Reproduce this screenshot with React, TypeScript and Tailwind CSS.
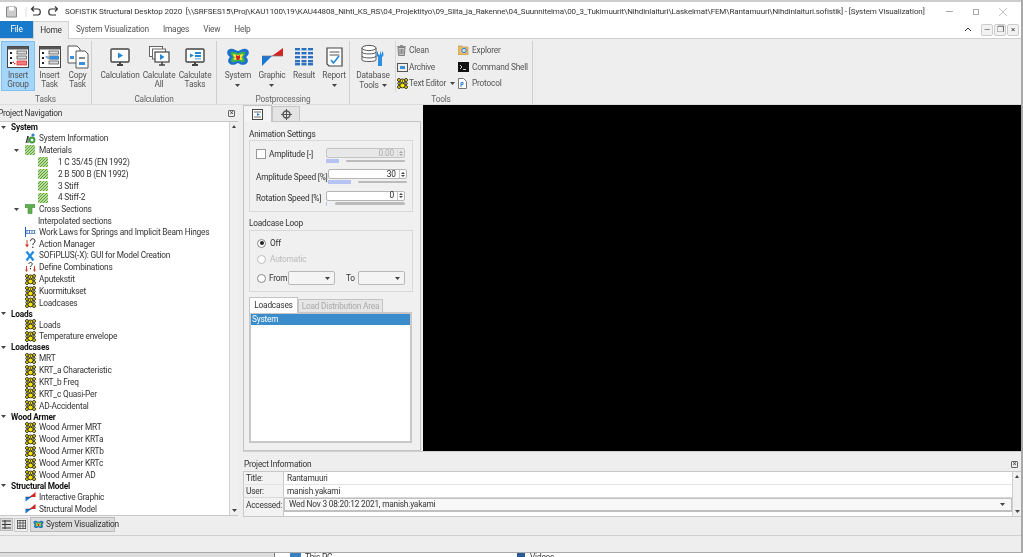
import type { ReactNode } from "react";

// small drawn icons
const Bear = () => (
  <svg width="11" height="11" viewBox="0 0 11 11" className="shrink-0">
    <g fill="#f5e400" stroke="#222" strokeWidth="0.9">
      <circle cx="2" cy="2" r="1.5" />
      <circle cx="9" cy="2" r="1.5" />
      <circle cx="2" cy="9" r="1.5" />
      <circle cx="9" cy="9" r="1.5" />
      <circle cx="1.8" cy="5.5" r="1.1" />
      <circle cx="9.2" cy="5.5" r="1.1" />
      <ellipse cx="5.5" cy="3" rx="2.4" ry="2" />
      <ellipse cx="5.5" cy="7.5" rx="2.6" ry="2.4" />
    </g>
    <circle cx="5.5" cy="3" r="0.7" fill="#222" />
  </svg>
);

const Hatch = () => (
  <svg width="10" height="10" viewBox="0 0 10 10" className="shrink-0">
    <rect width="10" height="10" fill="#b9dc9c" />
    <path d="M0 3 3 0M0 6 6 0M0 9 9 0M2 10 10 2M5 10 10 5M8 10 10 8" stroke="#4c9a2a" strokeWidth="0.9" />
  </svg>
);

const TSection = () => (
  <svg width="10" height="10" viewBox="0 0 10 10" className="shrink-0">
    <path d="M0 0.5h10v3H7v6H3v-6H0z" fill="#5fb04f" stroke="#3c8a36" strokeWidth="0.6" />
  </svg>
);

const SysInfo = () => (
  <svg width="11" height="11" viewBox="0 0 11 11" className="shrink-0">
    <path d="M1 10 3 3v7" fill="none" stroke="#222" strokeWidth="1" />
    <circle cx="7" cy="7" r="3.4" fill="#3f9a3a" />
    <circle cx="7" cy="7" r="1.5" fill="#fff" />
    <circle cx="8" cy="2" r="1.6" fill="#2d7fd0" />
  </svg>
);

const WorkLaw = () => (
  <svg width="11" height="10" viewBox="0 0 11 10" className="shrink-0">
    <path d="M0.5 0v10" stroke="#1f5fb0" strokeWidth="1" />
    <path d="M1 3.5h9.5M1 6.5h9.5" stroke="#3a6fb8" strokeWidth="0.7" />
    <path d="M2 3.5v3M4.5 3.5v3M7 3.5v3M9.5 3.5v3" stroke="#3a6fb8" strokeWidth="0.9" />
  </svg>
);

const Action = () => (
  <svg width="11" height="11" viewBox="0 0 11 11" className="shrink-0">
    <path d="M2 2v5" stroke="#d63b2f" strokeWidth="1" />
    <path d="M0 6.5h4l-2 3z" fill="#d63b2f" />
    <path d="M5.5 3c0-3 4.5-3 4.5 0 0 2-2.2 2-2.2 4" fill="none" stroke="#222" strokeWidth="1" />
    <rect x="7.3" y="8.6" width="1.1" height="1.4" fill="#222" />
  </svg>
);

const Combos = () => (
  <svg width="11" height="11" viewBox="0 0 11 11" className="shrink-0">
    <path d="M1.5 4v4M9.5 4v4" stroke="#d63b2f" strokeWidth="1" />
    <path d="M0 7.5h3L1.5 10zM8 7.5h3L9.5 10z" fill="#d63b2f" />
    <path d="M3.8 2c0-2 3.4-2 3.4 0 0 1.5-1.7 1.5-1.7 3" fill="none" stroke="#222" strokeWidth="0.9" />
    <rect x="5" y="6" width="1" height="1.2" fill="#222" />
  </svg>
);

const XMark = () => (
  <svg width="10" height="10" viewBox="0 0 10 10" className="shrink-0">
    <path d="M1.5 0.5 8.5 9.5M8.5 0.5 1.5 9.5" stroke="#1e88e5" strokeWidth="2.2" />
  </svg>
);

const GraphicSmall = ({ s = 11 }: { s?: number }) => (
  <svg width={s} height={s} viewBox="0 0 22 22" className="shrink-0">
    <path d="M1 12 13 12 1 21z" fill="#1976d2" />
    <path d="M21 2v10H9z" fill="#d32424" />
    <path d="M1 12h12" stroke="#333" strokeWidth="1" />
  </svg>
);

const Caret = () => (
  <svg width="5" height="3" viewBox="0 0 5 3" className="shrink-0">
    <path d="M0 0h5L2.5 3z" fill="#444" />
  </svg>
);

type Row = {
  label: string;
  level: 0 | 1 | 2;
  icon?: ReactNode;
  open?: boolean;
};

const bearRow = (label: string): Row => ({ label, level: 1, icon: <Bear /> });

const rows: Row[] = [
  { label: "System", level: 0 },
  { label: "System Information", level: 1, icon: <SysInfo /> },
  { label: "Materials", level: 1, icon: <Hatch />, open: true },
  { label: "1 C 35/45 (EN 1992)", level: 2, icon: <Hatch /> },
  { label: "2 B 500 B (EN 1992)", level: 2, icon: <Hatch /> },
  { label: "3 Stiff", level: 2, icon: <Hatch /> },
  { label: "4 Stiff-2", level: 2, icon: <Hatch /> },
  { label: "Cross Sections", level: 1, icon: <TSection />, open: true },
  { label: "Interpolated sections", level: 1 },
  { label: "Work Laws for Springs and Implicit Beam Hinges", level: 1, icon: <WorkLaw /> },
  { label: "Action Manager", level: 1, icon: <Action /> },
  { label: "SOFiPLUS(-X): GUI for Model Creation", level: 1, icon: <XMark /> },
  { label: "Define Combinations", level: 1, icon: <Combos /> },
  bearRow("Aputekstit"),
  bearRow("Kuormitukset"),
  bearRow("Loadcases"),
  { label: "Loads", level: 0 },
  bearRow("Loads"),
  bearRow("Temperature envelope"),
  { label: "Loadcases", level: 0 },
  bearRow("MRT"),
  bearRow("KRT_a Characteristic"),
  bearRow("KRT_b Freq"),
  bearRow("KRT_c Quasi-Per"),
  bearRow("AD-Accidental"),
  { label: "Wood Armer", level: 0 },
  bearRow("Wood Armer MRT"),
  bearRow("Wood Armer KRTa"),
  bearRow("Wood Armer KRTb"),
  bearRow("Wood Armer KRTc"),
  bearRow("Wood Armer AD"),
  { label: "Structural Model", level: 0 },
  { label: "Interactive Graphic", level: 1, icon: <GraphicSmall /> },
  { label: "Structural Model", level: 1, icon: <GraphicSmall /> },
];

const TreeRow = ({ row }: { row: Row }) => {
  if (row.level === 0) {
    return (
      <div className="h-[10px] flex items-center pl-[1px] font-bold text-[#111] shrink-0 whitespace-nowrap">
        <span className="w-[10px] flex"><Caret /></span>
        <span>{row.label}</span>
      </div>
    );
  }
  if (row.level === 2) {
    return (
      <div className="h-[11.85px] flex items-center pl-[38px] shrink-0 whitespace-nowrap">
        <span className="w-[20px] flex">{row.icon}</span>
        <span>{row.label}</span>
      </div>
    );
  }
  if (!row.icon) {
    return (
      <div className="h-[10.5px] flex items-center pl-[38px] shrink-0 whitespace-nowrap">
        <span>{row.label}</span>
      </div>
    );
  }
  return (
    <div className="h-[11.85px] flex items-center pl-[14px] shrink-0 whitespace-nowrap">
      <span className="w-[11px] flex">{row.open && <Caret />}</span>
      <span className="w-[14px] flex">{row.icon}</span>
      <span>{row.label}</span>
    </div>
  );
};

// ribbon big icons
const InsertIcon = ({ kind }: { kind: "group" | "task" }) => (
  <svg width="22" height="22" viewBox="0 0 22 22">
    <rect x="0.5" y="0.5" width="21" height="21" fill="#fff" stroke="#444" />
    <rect x="0.5" y="0.5" width="21" height="3" fill="#555" />
    <g fill="#222">
      <rect x="3" y="6" width="2" height="2" />
      <rect x="3" y="11" width="2" height="2" />
      <rect x="3" y="16" width="2" height="2" />
    </g>
    <g fill="#ddd" stroke="#555" strokeWidth="0.8">
      <rect x="10" y="5" width="9.5" height="3" />
      <rect x="10" y="10" width="9.5" height="3" />
    </g>
    {kind === "group" ? (
      <>
        <rect x="10" y="15" width="9.5" height="4" fill="#f47c7c" stroke="#c33" strokeWidth="0.8" />
        <path d="M9 17H5l2-2v4z" fill="#d32f2f" />
      </>
    ) : (
      <>
        <rect x="11" y="10" width="8.5" height="3.5" fill="#3a8fdc" />
        <path d="M10 11.5H6l2.5-2v4z" fill="#1976d2" />
        <rect x="10" y="15" width="9.5" height="3" fill="#ddd" stroke="#555" strokeWidth="0.8" />
      </>
    )}
  </svg>
);

const CopyIcon = () => (
  <svg width="22" height="24" viewBox="0 0 22 24">
    <path d="M1 1h9l3 3v14H1z" fill="#fff" stroke="#555" />
    <path d="M9 6h9l3 3v14H9z" fill="#fff" stroke="#555" />
    <rect x="3" y="11" width="4" height="3" fill="#3a8fdc" />
    <rect x="12" y="12" width="6" height="2" fill="#888" />
    <rect x="12" y="17" width="6" height="3" fill="#3a8fdc" />
  </svg>
);

const Monitor = ({ children }: { children?: ReactNode }) => (
  <g>
    <rect x="1" y="1" width="18" height="13" rx="1" fill="#fff" stroke="#444" strokeWidth="1.4" />
    <path d="M7 17h6M10 14v3" stroke="#444" strokeWidth="2" />
    {children}
  </g>
);

const CalcIcon = () => (
  <svg width="20" height="18" viewBox="0 0 20 18">
    <Monitor><path d="M8 4.5v6l5-3z" fill="#1f88d8" /></Monitor>
  </svg>
);

const CalcAllIcon = () => (
  <svg width="21" height="21" viewBox="0 0 21 21">
    <rect x="0.5" y="0.5" width="13" height="10" fill="#fff" stroke="#666" />
    <rect x="3.5" y="3" width="13" height="10" fill="#fff" stroke="#666" />
    <rect x="6" y="6" width="14" height="10" fill="#fff" stroke="#444" strokeWidth="1.2" />
    <path d="M11 8v6l4.5-3z" fill="#1f88d8" />
    <path d="M10 19h6M13 16v3" stroke="#444" strokeWidth="1.6" />
  </svg>
);

const CalcTasksIcon = () => (
  <svg width="20" height="18" viewBox="0 0 20 18">
    <Monitor>
      <path d="M9 7.5 5 5.5v4z" fill="#1f88d8" />
      <rect x="10" y="4" width="6" height="2" fill="#1f88d8" />
      <rect x="10" y="7" width="6" height="2" fill="#1f88d8" />
      <rect x="10" y="10" width="6" height="1.5" fill="#8bbbe6" />
    </Monitor>
  </svg>
);

const SystemIcon = ({ w = 24, h = 18 }: { w?: number; h?: number }) => (
  <svg width={w} height={h} viewBox="0 0 24 18" className="shrink-0">
    <path d="M2 2c4-3 7 0 10 1 3-1 6-4 10-1 2 3 0 6-2 7 2 2 3 5 0 7-4 2-6 0-8-1-2 1-5 3-8 1-3-2-2-5 0-7C2 8 0 5 2 2z" fill="#1f6fd0" />
    <path d="M5 4c3-1 5 1 7 1 2 0 4-2 7-1 1 2-1 4-2 5 1 1 3 3 1 5-3 1-4-1-6-1s-3 2-6 1c-2-2 0-4 1-5-1-1-3-3-2-5z" fill="#39b54a" />
    <path d="M7 6c2 0 3 1 5 1s3-1 5-1c0 2-1 3-2 3 1 1 2 2 1 3-2 0-3-1-4-1s-2 1-4 1c-1-1 0-2 1-3-1 0-2-1-2-3z" fill="#ffe23a" />
    <path d="M10 7l2 1 2-1v3l-1 2h-2l-1-2z" fill="#d4202a" />
  </svg>
);

const GraphicIcon = () => (
  <svg width="21" height="18" viewBox="0 0 21 18">
    <path d="M0 8h10L0 18z" fill="#1976d2" />
    <path d="M21 0v8H10z" fill="#d32424" />
    <path d="M0 8h21" stroke="#777" strokeWidth="0.7" />
  </svg>
);

const ResultIcon = () => (
  <svg width="18" height="18" viewBox="0 0 18 18">
    {[0, 4, 8, 12, 15].map((y) =>
      [0, 6.5, 13].map((x) => (
        <rect key={`${x}-${y}`} x={x} y={y} width="5" height="2.4" fill="#2b6fc0" />
      ))
    )}
  </svg>
);

const ReportIcon = () => (
  <svg width="17" height="20" viewBox="0 0 17 20">
    <path d="M1 1h15v18H3l-2-2z" fill="#fff" stroke="#444" strokeWidth="1.2" />
    <path d="M3.5 5h10M3.5 8h10" stroke="#555" />
    <path d="M5 13l2.5 3L13 9" fill="none" stroke="#1f88d8" strokeWidth="1.6" />
  </svg>
);

const DbIcon = () => (
  <svg width="24" height="24" viewBox="0 0 24 24">
    <g fill="#fff" stroke="#555">
      <path d="M1 4v12c0 2 14 2 14 0V4z" />
      <ellipse cx="8" cy="4" rx="7" ry="2.6" />
      <path d="M1 8c0 2.6 14 2.6 14 0M1 12c0 2.6 14 2.6 14 0" fill="none" />
    </g>
    <path d="M19 7v4l-2-1v-3c-2 2-2 5 0 6v9h4v-9c2-1 2-4 0-6v4z" fill="#2f8fe0" />
  </svg>
);

const RibbonBtn = ({
  lines,
  icon,
  w,
  caret,
  active,
}: {
  lines: string[];
  icon: ReactNode;
  w: string;
  caret?: boolean;
  active?: boolean;
}) => (
  <div
    className={`${w} h-[50px] flex flex-col items-center shrink-0 border ${
      active ? "bg-[#a4d6fb] border-[#7ec1f3]" : "border-transparent"
    }`}
  >
    <div className="h-[29px] flex items-center justify-center">{icon}</div>
    <div className="text-center leading-[9px] whitespace-nowrap">
      {lines.map((l) => (
        <div key={l}>{l}</div>
      ))}
      {caret && <div className="flex justify-center mt-[4px]"><Caret /></div>}
    </div>
  </div>
);

const RibbonGroup = ({ label, w, children }: { label: string; w: string; children: ReactNode }) => (
  <div className={`${w} h-[63px] shrink-0 flex flex-col border-r border-[#cfcfcf]`}>
    <div className="h-[51px] flex items-start">{children}</div>
    <div className="text-center text-[#666] mt-[3px]">{label}</div>
  </div>
);

const SmallTool = ({ icon, label, caret }: { icon: ReactNode; label: string; caret?: boolean }) => (
  <div className="h-[16.5px] flex items-center">
    <span className="w-[12px] flex justify-start">{icon}</span>
    <span className="whitespace-nowrap">{label}</span>
    {caret && <span className="ml-[4px] flex"><Caret /></span>}
  </div>
);

const Spin = ({ value, disabled }: { value: string; disabled?: boolean }) => (
  <div className={`h-[10px] w-[79px] rounded-[2px] border flex items-center justify-end ${disabled ? "bg-[#e8e8e8] border-[#c4c4c4] text-[#aaa]" : "bg-white border-[#b5b5b5] text-[#222]"}`}>
    <span className="leading-none pr-[3px]">{value}</span>
    <span className={`w-[7px] h-full border-l border-[#c4c4c4] flex flex-col items-center justify-center gap-[1px] ${disabled ? "opacity-40" : ""}`}>
      <span className="w-0 h-0 border-x-[2px] border-x-transparent border-b-[2px] border-b-[#444]" />
      <span className="w-0 h-0 border-x-[2px] border-x-transparent border-t-[2px] border-t-[#444]" />
    </span>
  </div>
);

const Slide = ({ bar, gap }: { bar: string; gap: string }) => (
  <div className="w-[79px] h-[4px] flex items-center mt-[1px]">
    <span className={`${bar} h-[4px] bg-[#b6c3f2] shrink-0`} />
    <span className={`${gap} shrink-0`} />
    <span className="flex-1 h-[2.5px] bg-[#bbb] rounded-full" />
  </div>
);

const Radio = ({ on, off }: { on?: boolean; off?: boolean }) => (
  <span className={`w-[9px] h-[9px] rounded-full border flex items-center justify-center shrink-0 ${off ? "border-[#bbb]" : "border-[#888]"} bg-white`}>
    {on && <span className="w-[4px] h-[4px] rounded-full bg-[#222]" />}
  </span>
);

const Combo = ({ w }: { w: string }) => (
  <div className={`${w} h-[14px] bg-[#f4f4f4] border border-[#b8b8b8] rounded-[2px] flex items-center justify-end pr-[4px] shrink-0`}>
    <Caret />
  </div>
);

const ScrollBar = ({ h }: { h: string }) => (
  <div className={`${h} w-[9px] bg-[#f0f0f0] border-l border-[#cfcfcf] flex flex-col items-center justify-between py-[3px] shrink-0`}>
    <span className="w-0 h-0 border-x-[2.5px] border-x-transparent border-b-[3px] border-b-[#444]" />
    <Caret />
  </div>
);

const CloseBox = () => (
  <span className="w-[7px] h-[7px] rounded-[1px] border border-[#666] flex items-center justify-center text-[7px] leading-none text-[#444] shrink-0">×</span>
);

export default function App() {
  return (
    <div className="w-[1023px] h-[557px] overflow-hidden flex flex-col bg-[#b9b9b9] text-[8.3px] tracking-[-0.2px] text-[#333] font-['Roboto',sans-serif] leading-none blur-[0.3px]">
      <div className="h-[553px] flex shrink-0">
        <div className="w-[1021px] h-[553px] flex flex-col bg-[#eeeeee] border-b border-[#a8a8a8] shrink-0">
          {/* title bar */}
          <div className="h-[21px] flex items-center bg-white border-t-2 border-[#cdcdcd] shrink-0">
            <svg width="52" height="12" viewBox="0 0 52 12" className="ml-[6px] shrink-0">
              <path d="M0.5 1h9l1 1v9h-10z" fill="#ccc" stroke="#888" />
              <rect x="3" y="1" width="5" height="3.5" fill="#fff" />
              <path d="M20 1v10" stroke="#ddd" />
              <path d="M27 9h5c3 0 3-6 0-6h-6M28 0.5 25.5 3 28 5.5" fill="none" stroke="#333" strokeWidth="1.2" />
              <path d="M50 9h-5c-3 0-3-6 0-6h6M49 0.5 51.5 3 49 5.5" fill="none" stroke="#333" strokeWidth="1.2" />
            </svg>
            <span className="ml-[7px] text-[8px] tracking-[-0.12px] text-[#333] whitespace-pre">
              {"SOFiSTiK Structural Desktop 2020  [\\\\SRFSES15\\Proj\\KAU1100\\19\\KAU44808_Nihti_KS_RS\\04_Projektityo\\09_Silta_ja_Rakenne\\04_Suunnitelma\\00_3_Tukimuurit\\Nihdinlaituri\\Laskelmat\\FEM\\Rantamuuri\\Nihdinlaituri.sofistik] - [System Visualization]"}
            </span>
            <div className="ml-auto flex items-center gap-[20px] pr-[14px]">
              <span className="w-[7px] h-px bg-[#aaa]" />
              <span className="w-[6px] h-[6px] border border-[#aaa]" />
              <svg width="8" height="8" viewBox="0 0 8 8"><path d="M0 0l8 8M8 0 0 8" stroke="#aaa" strokeWidth="0.7" /></svg>
            </div>
          </div>
          {/* menu tabs */}
          <div className="h-[18px] flex items-stretch bg-white border-b border-[#d0d0d0] shrink-0 text-[#555]">
            <div className="w-[33px] bg-[#1979ca] text-white flex items-center justify-center">File</div>
            <div className="w-[36px] -mb-px bg-[#eeeeee] border-x border-t border-[#d0d0d0] flex items-center justify-center text-[#333]">Home</div>
            <div className="ml-[7px] flex items-center gap-[14px]">
              <span>System Visualization</span>
              <span>Images</span>
              <span>View</span>
              <span>Help</span>
            </div>
            <div className="ml-auto flex items-center pr-[2px] gap-[1px]">
              <svg width="8" height="5" viewBox="0 0 8 5" className="mr-[8px]"><path d="M1 4l3-3 3 3" fill="none" stroke="#333" /></svg>
              {["—", "❐", "×"].map((c) => (
                <span key={c} className="w-[12px] h-[12px] border border-[#ccc] rounded-[2px] bg-[#f2f2f2] flex items-center justify-center text-[8px] text-[#333]">{c}</span>
              ))}
            </div>
          </div>
          {/* ribbon */}
          <div className="h-[66px] flex pt-[2px] border-b border-[#dcdcdc] shrink-0 text-[#555]">
            <RibbonGroup label="Tasks" w="w-[92px]">
              <div className="pl-[1px] flex">
                <RibbonBtn lines={["Insert", "Group"]} w="w-[34px]" active icon={<InsertIcon kind="group" />} />
                <RibbonBtn lines={["Insert", "Task"]} w="w-[29px]" icon={<InsertIcon kind="task" />} />
                <RibbonBtn lines={["Copy", "Task"]} w="w-[27px]" icon={<CopyIcon />} />
              </div>
            </RibbonGroup>
            <RibbonGroup label="Calculation" w="w-[125px]">
              <div className="pl-[7px] flex">
                <RibbonBtn lines={["Calculation"]} w="w-[42px]" icon={<CalcIcon />} />
                <RibbonBtn lines={["Calculate", "All"]} w="w-[36px]" icon={<CalcAllIcon />} />
                <RibbonBtn lines={["Calculate", "Tasks"]} w="w-[36px]" icon={<CalcTasksIcon />} />
              </div>
            </RibbonGroup>
            <RibbonGroup label="Postprocessing" w="w-[133px]">
              <div className="pl-[4px] flex">
                <RibbonBtn lines={["System"]} w="w-[34px]" caret icon={<SystemIcon />} />
                <RibbonBtn lines={["Graphic"]} w="w-[34px]" caret icon={<GraphicIcon />} />
                <RibbonBtn lines={["Result"]} w="w-[30px]" icon={<ResultIcon />} />
                <RibbonBtn lines={["Report"]} w="w-[30px]" caret icon={<ReportIcon />} />
              </div>
            </RibbonGroup>
            <RibbonGroup label="Tools" w="w-[183px]">
              <div className="pl-[4px] flex">
                <div className="w-[38px] shrink-0 flex flex-col items-center">
                  <div className="h-[29px] flex items-center"><DbIcon /></div>
                  <div className="text-center leading-[9.5px] mt-[1px]">
                    <div>Database</div>
                    <div className="flex items-center justify-center gap-[3px]">Tools <Caret /></div>
                  </div>
                </div>
                <div className="w-[63px] ml-[3px] shrink-0 border-l border-[#d8d8d8] pl-[1px] pt-[1px]">
                  <SmallTool label="Clean" icon={
                    <svg width="9" height="11" viewBox="0 0 9 11"><path d="M1 2.5h7l-0.6 8H1.6z" fill="#ccc" stroke="#666" strokeWidth="0.8" /><path d="M0 1.5h9M3 0.5h3M3 4v5M4.5 4v5M6 4v5" stroke="#666" strokeWidth="0.7" /></svg>
                  } />
                  <SmallTool label="Archive" icon={
                    <svg width="11" height="10" viewBox="0 0 11 10"><rect x="0.5" y="1.5" width="10" height="8" fill="#eee" stroke="#555" /><rect x="3" y="4" width="5" height="3" fill="#3a8fdc" /></svg>
                  } />
                  <SmallTool label="Text Editor" caret icon={<Bear />} />
                </div>
                <div className="shrink-0 pt-[1px] [&>div>span:first-child]:w-[14px]">
                  <SmallTool label="Explorer" icon={
                    <svg width="11" height="10" viewBox="0 0 11 10"><path d="M0 1h4l1 1h5v8H0z" fill="#e9b969" stroke="#b98a3a" strokeWidth="0.6" /><circle cx="6" cy="5.5" r="2.2" fill="#bfe0f7" stroke="#2f7fd0" /></svg>
                  } />
                  <SmallTool label="Command Shell" icon={
                    <svg width="11" height="10" viewBox="0 0 11 10"><rect width="11" height="10" fill="#111" /><path d="M2 3l2 2-2 2M5 7.5h3" stroke="#fff" strokeWidth="0.8" fill="none" /></svg>
                  } />
                  <SmallTool label="Protocol" icon={
                    <svg width="9" height="11" viewBox="0 0 9 11"><path d="M0.5 0.5h5l3 3v7h-8z" fill="#fff" stroke="#777" /><path d="M3 9V4.5h2v2H3" fill="none" stroke="#2f7fd0" /></svg>
                  } />
                </div>
              </div>
            </RibbonGroup>
          </div>
          {/* body */}
          <div className="flex-1 flex min-h-0">
            {/* project navigation */}
            <div className="w-[238px] flex flex-col shrink-0">
              <div className="h-[16px] flex items-center justify-between pr-[3px] pl-0 border-b border-[#c8c8c8] shrink-0 mt-[1px]">
                <span className="text-[#333] -ml-[2px] whitespace-nowrap">Project Navigation</span>
                <CloseBox />
              </div>
              <div className="h-[394px] flex bg-white shrink-0 border-b border-[#c8c8c8]">
                <div className="flex-1 overflow-hidden flex flex-col text-[#333] pt-[0.5px]">
                  {rows.map((r, i) => (
                    <TreeRow key={i} row={r} />
                  ))}
                </div>
                <ScrollBar h="h-full" />
              </div>
              <div className="flex items-center gap-[1px] pt-[1px] shrink-0">
                <span className="w-[13px] h-[13px] bg-[#ddd] border border-[#bbb] flex items-center justify-center">
                  <svg width="9" height="9" viewBox="0 0 9 9"><path d="M0 1h9M0 4.5h9M0 8h9M3 0v9" stroke="#333" /></svg>
                </span>
                <span className="w-[14px] h-[14px] bg-[#eee] border border-[#ccc] flex items-center justify-center">
                  <svg width="9" height="9" viewBox="0 0 9 9"><path d="M0.5 0v9M3 0v9M6 0v9M8.5 0v9M0 0.5h9M0 3h9M0 6h9M0 8.5h9" stroke="#333" strokeWidth="0.7" /></svg>
                </span>
                <span className="ml-[1px] w-[85px] h-[15px] bg-[#dcdcdc] border border-[#bbb] flex items-center gap-[2px] pl-[2px] text-[#333] whitespace-nowrap">
                  <SystemIcon w={11} h={9} />
                  System Visualization
                </span>
              </div>
            </div>
            {/* right part */}
            <div className="flex-1 flex flex-col min-w-0">
              <div className="h-[346px] flex shrink-0">
                {/* visualization panel */}
                <div className="w-[178px] ml-[5px] flex flex-col shrink-0">
                  <div className="h-[17px] flex shrink-0 -mb-px">
                    <div className="w-[29px] bg-[#f4f4f4] border-x border-t border-[#c4c4c4] flex items-center justify-center z-10">
                      <svg width="11" height="11" viewBox="0 0 11 11"><rect x="0.5" y="0.5" width="10" height="10" fill="#fff" stroke="#444" /><path d="M2 3h7M2 8h7" stroke="#666" /><path d="M5 4v3l3-1.5z" fill="#2f7fd0" /></svg>
                    </div>
                    <div className="w-[28px] mt-[1px] bg-[#e4e4e4] border-x border-t border-[#c4c4c4] flex items-center justify-center">
                      <svg width="11" height="11" viewBox="0 0 11 11"><circle cx="5.5" cy="5.5" r="3.5" fill="none" stroke="#555" strokeWidth="1.4" /><path d="M5.5 0v11M0 5.5h11" stroke="#555" /></svg>
                    </div>
                  </div>
                  <div className="flex-1 border border-[#c4c4c4] bg-[#f0f0f0] px-[5px] pt-[9px] flex flex-col">
                    <div className="text-[#333] h-[7px] flex items-center whitespace-nowrap">Animation Settings</div>
                    <div className="mt-[2px] h-[72px] w-[164px] border border-[#d8d8d8] pl-[6px] pr-[7px] pt-[7px] flex flex-col">
                      <div className="flex justify-between h-[21px]">
                        <div className="flex items-center h-[12px] gap-[3px] whitespace-nowrap">
                          <span className="w-[10px] h-[10px] bg-white border border-[#999]" />
                          <span>Amplitude [-]</span>
                        </div>
                        <div>
                          <Spin value="0.00" disabled />
                          <Slide bar="w-[13px]" gap="w-[7px]" />
                        </div>
                      </div>
                      <div className="flex justify-between h-[21.5px]">
                        <span className="pt-[4px] whitespace-nowrap">Amplitude Speed [%]</span>
                        <div>
                          <Spin value="30" />
                          <Slide bar="w-[23px]" gap="w-[7px]" />
                        </div>
                      </div>
                      <div className="flex justify-between">
                        <span className="pt-[3px] whitespace-nowrap">Rotation Speed [%]</span>
                        <div>
                          <Spin value="0" />
                          <Slide bar="w-[1px]" gap="w-[8px]" />
                        </div>
                      </div>
                    </div>
                    <div className="mt-[7.5px] text-[#333] h-[7px] flex items-center whitespace-nowrap">Loadcase Loop</div>
                    <div className="mt-[3.5px] h-[62px] w-[164px] border border-[#d8d8d8] pl-[7px] pr-[7px] pt-[7.5px] flex flex-col">
                      <div className="flex items-center gap-[4px] h-[9px]"><Radio on /><span>Off</span></div>
                      <div className="flex items-center gap-[4px] h-[9px] mt-[7px] text-[#bbb]"><Radio off /><span>Automatic</span></div>
                      <div className="flex items-center mt-[7.5px] h-[14px]">
                        <Radio />
                        <span className="ml-[3px] w-[19px]">From</span>
                        <Combo w="w-[47px]" />
                        <span className="ml-[11px] w-[12px]">To</span>
                        <Combo w="w-[47px]" />
                      </div>
                    </div>
                    <div className="mt-[5px] flex items-end h-[16px] -mb-px">
                      <div className="w-[49px] h-[16px] border-x border-t border-[#c4c4c4] bg-white flex items-center justify-center z-10">Loadcases</div>
                      <div className="w-[85px] h-[14px] border-x border-t border-[#c4c4c4] bg-[#e6e6e6] text-[#aaa] flex items-center justify-center whitespace-nowrap">Load Distribution Area</div>
                    </div>
                    <div className="h-[131px] w-[163px] bg-white border-2 border-[#c8c8c8] shrink-0">
                      <div className="h-[11px] bg-[#3a8cca] text-white flex items-center pl-[1px]">System</div>
                    </div>
                  </div>
                </div>
                {/* viewport */}
                <div className="flex-1 ml-[2px] bg-black" />
              </div>
              {/* project information */}
              <div className="flex-1 flex flex-col min-h-0 ml-[5px] border-t border-[#cfcfcf]">
                <div className="h-[19px] flex items-end justify-between pr-[3px] pb-[3px] shrink-0 pl-[1px]">
                  <span className="text-[#333]">Project Information</span>
                  <CloseBox />
                </div>
                <div className="flex h-[46px] border-y border-[#c8c8c8] overflow-hidden bg-white shrink-0">
                  <div className="flex-1 flex flex-col min-w-0 text-[#333]">
                    <div className="h-[13px] flex items-center border-b border-[#e4e4e4] shrink-0">
                      <span className="w-[41px] pl-[2px] h-full flex items-center border-x border-[#c8c8c8] bg-[#f2f2f2]">Title:</span>
                      <span className="pl-[3px]">Rantamuuri</span>
                    </div>
                    <div className="h-[13px] flex items-center border-b border-[#d8d8d8] shrink-0">
                      <span className="w-[41px] pl-[2px] h-full flex items-center border-x border-[#c8c8c8] bg-[#f2f2f2]">User:</span>
                      <span className="pl-[3px]">manish.yakami</span>
                    </div>
                    <div className="h-[14px] flex items-center shrink-0">
                      <span className="w-[41px] pl-[2px] h-full flex items-center border-x border-[#c8c8c8] bg-[#f2f2f2]">Accessed:</span>
                      <span className="flex-1 h-full pl-[4px] pr-[6px] flex items-center justify-between bg-[#f8f8f8] border border-[#c0c0c0] border-b-2">
                        Wed Nov 3 08:20:12 2021, manish.yakami
                        <Caret />
                      </span>
                    </div>
                    <div className="h-[5px] flex shrink-0">
                      <span className="w-[41px] h-full border-x border-[#c8c8c8] bg-[#f2f2f2]" />
                    </div>
                  </div>
                  <ScrollBar h="h-full" />
                </div>
                <div className="flex-1" />
              </div>
            </div>
          </div>
          {/* status bar */}
          <div className="h-[17px] border-t border-[#d0d0d0] bg-[#eeeeee] shrink-0" />
        </div>
        <div className="flex-1 bg-[#a9a9a9]" />
      </div>
      {/* desktop behind the window */}
      <div className="h-[4px] bg-white flex overflow-hidden text-[#333] shrink-0">
        <span className="w-[275px] h-full bg-[#dcdcdc] border-r border-[#777] shrink-0" />
        <span className="ml-[15px] w-[11px] h-full bg-[#3a7fc0] shrink-0" />
        <span className="ml-[4px] w-[212px] shrink-0 whitespace-nowrap">This PC</span>
        <span className="w-[8px] h-full bg-[#2b5a90] shrink-0" />
        <span className="ml-[5px] whitespace-nowrap">Videos</span>
      </div>
    </div>
  );
}
